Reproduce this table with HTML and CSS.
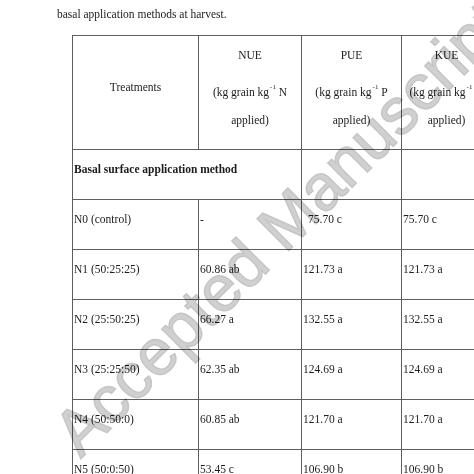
FILE: index.html
```html
<!DOCTYPE html>
<html>
<head>
<meta charset="utf-8">
<link rel="stylesheet" href="styles.css">
</head>
<body>
<div class="page">
  <p class="caption">basal application methods at harvest.</p>
  <div class="table">
    <div class="cell head treat"><span class="hl">Treatments</span></div>
    <div class="cell head"><span class="hl">NUE</span><span class="hl gap">(kg grain kg<sup>-1</sup> N</span><span class="hl">applied)</span></div>
    <div class="cell head"><span class="hl">PUE</span><span class="hl gap">(kg grain kg<sup>-1</sup> P</span><span class="hl">applied)</span></div>
    <div class="cell head"><span class="hl">KUE</span><span class="hl gap">(kg grain kg<sup>-1</sup> K</span><span class="hl">applied)</span></div>

    <div class="cell span2 bold">Basal surface application method</div>
    <div class="cell"></div>
    <div class="cell"></div>

    <div class="cell">N0 (control)</div>
    <div class="cell">-</div>
    <div class="cell indent">75.70 c</div>
    <div class="cell">75.70 c</div>

    <div class="cell">N1 (50:25:25)</div>
    <div class="cell">60.86 ab</div>
    <div class="cell">121.73 a</div>
    <div class="cell">121.73 a</div>

    <div class="cell">N2 (25:50:25)</div>
    <div class="cell">66.27 a</div>
    <div class="cell">132.55 a</div>
    <div class="cell">132.55 a</div>

    <div class="cell">N3 (25:25:50)</div>
    <div class="cell">62.35 ab</div>
    <div class="cell">124.69 a</div>
    <div class="cell">124.69 a</div>

    <div class="cell">N4 (50:50:0)</div>
    <div class="cell">60.85 ab</div>
    <div class="cell">121.70 a</div>
    <div class="cell">121.70 a</div>

    <div class="cell">N5 (50:0:50)</div>
    <div class="cell">53.45 c</div>
    <div class="cell">106.90 b</div>
    <div class="cell">106.90 b</div>
  </div>
  <div class="watermark">Accepted Manuscript</div>
</div>
</body>
</html>
```

FILE: styles.css
```css
html, body {
  margin: 0;
  padding: 0;
  background: #fff;
}
.page {
  position: relative;
  width: 474px;
  height: 474px;
  overflow: hidden;
  font-family: "Liberation Serif", "Times New Roman", serif;
  font-size: 11.5px;
  color: #1c1c1c;
}
.caption {
  margin: 7px 0 0 57px;
  line-height: 14px;
  height: 14px;
  white-space: nowrap;
}
.table {
  margin: 14px 0 0 72px;
  width: 420px;
  display: grid;
  grid-template-columns: 125px 102px 99px 89px;
  grid-template-rows: 113px repeat(7, 49px);
  gap: 1px;
  padding: 1px;
  background: #5e5e5e;
}
.cell {
  background: #fff;
  padding: 12px 0 0 1px;
  line-height: 14px;
  white-space: nowrap;
}
.cell.indent {
  padding-left: 6px;
}
.cell.span2 {
  grid-column: span 2;
}
.bold {
  font-weight: bold;
}
.head {
  padding: 5px 0 0 0;
  display: flex;
  flex-direction: column;
  align-items: center;
  text-align: center;
}
.head.treat {
  padding-top: 37px;
}
.hl {
  display: block;
  line-height: 28px;
  height: 28px;
}
.hl.gap {
  margin-top: 9px;
}
sup {
  font-size: 7px;
  vertical-align: top;
  line-height: 18px;
  margin-left: 1px;
}
.watermark {
  position: absolute;
  left: 80px;
  top: 404px;
  transform-origin: 0 54px;
  transform: rotate(-45deg);
  font-family: "Liberation Sans", Arial, sans-serif;
  font-size: 65px;
  line-height: 1;
  white-space: nowrap;
  color: #d0d0d0;
  -webkit-text-stroke: 1.5px #c6c6c6;
  mix-blend-mode: multiply;
  pointer-events: none;
}
```
